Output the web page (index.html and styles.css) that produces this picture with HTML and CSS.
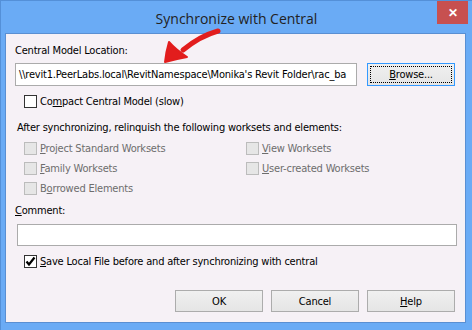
FILE: index.html
```html
<!DOCTYPE html>
<html lang="en">
<head>
    <meta charset="UTF-8">
    <title>Synchronize with Central</title>
    <link rel="stylesheet" href="styles.css">
</head>
<body>
    <div class="window">
        <div class="titlebar">
            <span class="title">Synchronize with Central</span>
            <button class="close" type="button">&#x2715;</button>
        </div>
        <div class="client">
            <label class="label" for="location">Central Model Location:</label>
            <div class="location-row">
                <div class="field" id="location">\\revit1.PeerLabs.local\RevitNamespace\Monika's Revit Folder\rac_ba</div>
                <button class="btn browse" type="button"><span class="focus"><u>B</u>rowse...</span></button>
            </div>
            <div class="check compact"><span class="box"></span><span>Co<u>m</u>pact Central Model (slow)</span></div>

            <div class="label after">After synchronizing, relinquish the following worksets and elements:</div>
            <div class="worksets">
                <div class="check disabled"><span class="box"></span><span><u>P</u>roject Standard Worksets</span></div>
                <div class="check disabled"><span class="box"></span><span><u>V</u>iew Worksets</span></div>
                <div class="check disabled"><span class="box"></span><span><u>F</u>amily Worksets</span></div>
                <div class="check disabled"><span class="box"></span><span><u>U</u>ser-created Worksets</span></div>
                <div class="check disabled"><span class="box"></span><span>B<u>o</u>rrowed Elements</span></div>
            </div>

            <div class="label comment-label"><u>C</u>omment:</div>
            <div class="field comment"></div>

            <div class="check save">
                <span class="box checked">
                    <svg width="11" height="11" viewBox="0 0 11 11"><path d="M1.5 5.5 L4 8.5 L9.5 1.5" fill="none" stroke="#000" stroke-width="2.2"/></svg>
                </span>
                <span><u>S</u>ave Local File before and after synchronizing with central</span>
            </div>

            <div class="buttons">
                <button class="btn" type="button">OK</button>
                <button class="btn" type="button">Cancel</button>
                <button class="btn" type="button"><u>H</u>elp</button>
            </div>
        </div>

        <!-- red annotation arrow drawn over the dialog -->
        <svg class="arrow" width="472" height="330" viewBox="0 0 472 330">
            <path d="M218 31 Q200 36 183 50" fill="none" stroke="#e21d1d" stroke-width="5" stroke-linecap="round"/>
            <path d="M169 42 Q176 50 187 57 Q176 59 165 62 Q166 52 169 42 Z" fill="#e21d1d" stroke="#e21d1d" stroke-width="2" stroke-linejoin="round"/>
        </svg>
    </div>
</body>
</html>
```

FILE: styles.css
```css
body {
    margin: 0;
    font-family: "DejaVu Sans Condensed", "Liberation Sans", Arial, sans-serif;
    font-size: 11px;
    letter-spacing: -0.2px;
    color: #000;
}
.window {
    position: relative;
    width: 472px;
    height: 330px;
    box-sizing: border-box;
    background: #6aabf5;
    border-top: 1px solid #5490d8;
    border-left: 1px solid #5490d8;
    overflow: hidden;
}
.titlebar {
    position: relative;
    height: 32px;
    display: flex;
    justify-content: center;
    align-items: center;
}
.title {
    font-family: "Open Sans", "Noto Sans", sans-serif;
    font-size: 14px;
    letter-spacing: 0;
    color: #222;
    margin-top: 3px;
}
.close {
    position: absolute;
    top: 0;
    left: 436px;
    width: 31px;
    height: 23px;
    border: none;
    background: #c75050;
    color: #fff;
    font-size: 12px;
    font-weight: bold;
    padding: 0;
}
.client {
    margin-left: 4px;
    width: 461px;
    height: 290px;
    box-sizing: border-box;
    background: #f6f1f6;
    border: 1px solid #5a8fd2;
    padding: 10px 0 0 9px;
}
.label {
    display: block;
    height: 14px;
    line-height: 14px;
    white-space: nowrap;
}
.location-row {
    display: flex;
    margin-top: 5px;
    height: 23px;
}
.field {
    box-sizing: border-box;
    background: #fff;
    border: 1px solid #ababab;
}
#location {
    width: 342px;
    height: 23px;
    line-height: 21px;
    padding-left: 3px;
    white-space: nowrap;
    overflow: hidden;
}
.btn {
    font-family: inherit;
    font-size: 11px;
    letter-spacing: inherit;
    color: #000;
    height: 22px;
    box-sizing: border-box;
    border: 1px solid #acacac;
    background: linear-gradient(#f0f0f0, #e5e5e5);
    padding: 0;
}
.browse {
    margin-left: 10px;
    width: 88px;
    height: 23px;
    border-color: #3399ff;
    padding: 2px;
}
.focus {
    display: block;
    height: 100%;
    box-sizing: border-box;
    border: 1px dotted #000;
    line-height: 15px;
}
.check {
    display: flex;
    align-items: center;
    height: 13px;
    white-space: nowrap;
}
.box {
    width: 13px;
    height: 13px;
    box-sizing: border-box;
    border: 1px solid #333;
    background: #fff;
    margin-right: 3px;
    display: flex;
    align-items: center;
    justify-content: center;
}
.compact {
    margin-top: 9px;
    margin-left: 9px;
}
.after {
    margin-top: 13px;
    margin-left: 2px;
}
.worksets {
    display: grid;
    grid-template-columns: 222px auto;
    row-gap: 7px;
    margin-top: 7px;
    margin-left: 9px;
}
.disabled {
    color: #6d6d6d;
}
.disabled .box {
    border-color: #bcbcbc;
    background: #e6e6e6;
}
.comment-label {
    margin-top: 9px;
}
.comment {
    margin-top: 6px;
    margin-left: 2px;
    width: 440px;
    height: 22px;
}
.save {
    margin-top: 9px;
    margin-left: 9px;
}
.buttons {
    display: flex;
    gap: 8px;
    margin-top: 22px;
    margin-left: 160px;
}
.buttons .btn {
    width: 88px;
}
.arrow {
    position: absolute;
    top: -1px;
    left: -1px;
    pointer-events: none;
}
```
